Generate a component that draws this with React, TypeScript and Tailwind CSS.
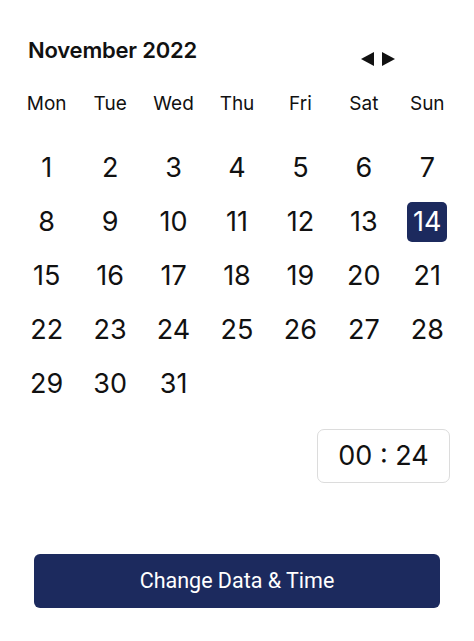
const days = ["Mon", "Tue", "Wed", "Thu", "Fri", "Sat", "Sun"];
const dates = Array.from({ length: 31 }, (_, i) => i + 1);
const selected = 14;

export default function App() {
  return (
    <div className="w-[474px] h-[641px] bg-white font-['Inter',sans-serif] text-[#111] flex flex-col">
      <div className="flex items-end pl-[28px] pt-[36px] h-[70px]">
        <div className="text-[22px] font-semibold leading-[28px] tracking-[-0.2px] mb-[6px]">
          November 2022
        </div>
        <div className="ml-[163px] flex items-center gap-[4px] mb-[3px]">
          <svg width="16" height="16" viewBox="0 0 16 16">
            <path d="M14 1 L1 8 L14 15 Z" fill="#111" />
          </svg>
          <svg width="16" height="16" viewBox="0 0 16 16">
            <path d="M2 1 L15 8 L2 15 Z" fill="#111" />
          </svg>
        </div>
      </div>

      <div className="grid grid-cols-7 px-[15px] mt-[22px] h-[24px] items-center">
        {days.map((d) => (
          <div key={d} className="text-center text-[19px] leading-[24px]">
            {d}
          </div>
        ))}
      </div>

      <div className="grid grid-cols-7 px-[15px] mt-[25px] auto-rows-[54px]">
        {dates.map((n) => (
          <div key={n} className="flex items-center justify-center">
            {n === selected ? (
              <div className="w-[40px] h-[40px] rounded-[5px] bg-[#1c2a5e] text-white text-[27px] flex items-center justify-center">
                {n}
              </div>
            ) : (
              <span className="text-[27px]">{n}</span>
            )}
          </div>
        ))}
      </div>

      <div className="flex justify-end pr-[24px] mt-[18px]">
        <div className="w-[133px] h-[54px] border border-[#dcdcdc] rounded-[7px] flex items-center justify-center text-[27px]">
          00 : 24
        </div>
      </div>

      <div className="px-[34px] mt-[71px]">
        <button className="w-full h-[54px] rounded-[6px] bg-[#1c2a5e] text-white text-[21.5px] font-['Roboto',sans-serif]">
          Change Data &amp; Time
        </button>
      </div>
    </div>
  );
}
